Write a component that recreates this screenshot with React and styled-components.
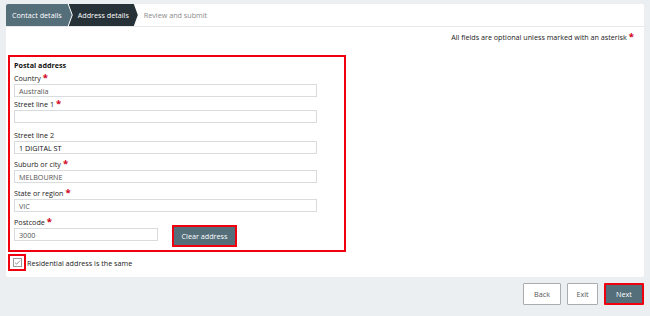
import React from "react";
import styled, { createGlobalStyle } from "styled-components";

const Global = createGlobalStyle`
  html, body { margin: 0; padding: 0; background: #eceff1; }
  body { font-family: "Open Sans", "Liberation Sans", sans-serif; font-size: 7.2px; color: #222; }
  * { box-sizing: border-box; }
`;

const Page = styled.div`
  width: 650px;
  height: 316px;
  padding: 4px 6px 0 6px;
  display: flex;
  flex-direction: column;
`;

const Card = styled.div`
  background: #fff;
  border-radius: 2px;
  height: 273px;
  display: flex;
  flex-direction: column;
`;

const TabBar = styled.div`
  height: 23px;
  display: flex;
  align-items: stretch;
  border-bottom: 1px solid #e6e8ea;
`;

const bgFor = (s) => (s === "done" ? "#546e7a" : s === "current" ? "#263238" : "transparent");

const Tab = styled.div`
  display: flex;
  align-items: center;
  height: 22px;
  padding: ${(p) => (p.$first ? "0 10px 0 6px" : p.$state === "todo" ? "0 0 0 6px" : "0 9px 0 9px")};
  margin-left: ${(p) => (p.$first || p.$state === "todo" ? "0" : "-3px")};
  background: ${(p) => bgFor(p.$state)};
  color: ${(p) => (p.$state === "todo" ? "#8a8a8a" : "#fff")};
  border-top-left-radius: ${(p) => (p.$first ? "2px" : "0")};
  white-space: nowrap;
  clip-path: ${(p) =>
    p.$state === "todo"
      ? "none"
      : p.$first
      ? "polygon(0 0, calc(100% - 4px) 0, 100% 50%, calc(100% - 4px) 100%, 0 100%)"
      : "polygon(0 0, calc(100% - 4px) 0, 100% 50%, calc(100% - 4px) 100%, 0 100%, 4px 50%)"};
`;

const Body = styled.div`
  padding: 0 0 0 2px;
  display: flex;
  flex-direction: column;
`;

const Note = styled.div`
  align-self: flex-end;
  padding: 5px 10px 0 0;
  height: 28px;
  line-height: 10px;
  color: #222;
`;

const Star = styled.span`
  color: #d0021b;
  font-size: 9.5px;
  font-weight: 700;
  margin-left: 2px;
  vertical-align: top;
  line-height: 9px;
`;

const Section = styled.div`
  width: 338px;
  border: 2px solid #f0000f;
  padding: 3px 4px 2px 4px;
  display: flex;
  flex-direction: column;
`;

const Heading = styled.div`
  font-weight: 700;
  line-height: 10px;
  height: 13px;
  color: #111;
`;

const Field = styled.div`
  display: flex;
  flex-direction: column;
  margin-bottom: ${(p) => (p.$gap != null ? p.$gap : 5)}px;
  padding-bottom: ${(p) => (p.$last ? "7px" : "0")};
`;

const Label = styled.div`
  line-height: 10px;
  height: 10px;
  margin-bottom: 1px;
  color: #222;
`;

const Input = styled.div`
  width: ${(p) => p.$w || 303}px;
  height: 13px;
  border: 1px solid #d9dcdf;
  background: #fff;
  padding: 0 4px;
  display: flex;
  align-items: center;
  color: ${(p) => (p.$dim ? "#555" : "#111")};
`;

const Row = styled.div`
  display: flex;
  align-items: flex-end;
  gap: 14px;
  margin-top: 1px;
`;

const ClearButton = styled.div`
  width: 65px;
  height: 22px;
  background: #546e7a;
  border: 2px solid #f0000f;
  color: #fff;
  display: flex;
  align-items: center;
  justify-content: center;
  margin-bottom: 1px;
`;

const CheckRow = styled.div`
  display: flex;
  align-items: center;
  margin-top: 2px;
  height: 17px;
`;

const CheckHighlight = styled.div`
  width: 18px;
  height: 17px;
  border: 2px solid #f0000f;
  display: flex;
  align-items: center;
  justify-content: center;
`;

const CheckLabel = styled.span`
  margin-left: 1px;
  color: #222;
`;

const Footer = styled.div`
  display: flex;
  justify-content: flex-end;
  gap: 6px;
  padding-top: 6px;
`;

const Button = styled.div`
  height: 22px;
  width: ${(p) => p.$w}px;
  display: flex;
  align-items: center;
  justify-content: center;
  background: ${(p) => (p.$primary ? "#546e7a" : "#fff")};
  color: ${(p) => (p.$primary ? "#fff" : "#555")};
  border: ${(p) => (p.$primary ? "2px solid #f0000f" : "1px solid #a9adb0")};
  border-radius: 1px;
`;

const CheckIcon = () => (
  <svg width="9" height="9" viewBox="0 0 9 9">
    <rect x="0.5" y="0.5" width="8" height="8" fill="#fff" stroke="#9a9a9a" strokeWidth="1" />
    <path d="M2 4.6 L3.7 6.2 L7 2.6" fill="none" stroke="#8a8a8a" strokeWidth="0.9" />
  </svg>
);

export default function App() {
  return (
    <>
      <Global />
      <Page>
        <Card>
          <TabBar>
            <Tab $first $state="done">Contact details</Tab>
            <Tab $state="current">Address details</Tab>
            <Tab $state="todo">Review and submit</Tab>
          </TabBar>
          <Body>
            <Note>
              All fields are optional unless marked with an asterisk<Star>*</Star>
            </Note>
            <Section>
              <Heading>Postal address</Heading>
              <Field $gap={2}>
                <Label>Country<Star>*</Star></Label>
                <Input $dim>Australia</Input>
              </Field>
              <Field $gap={7}>
                <Label>Street line 1<Star>*</Star></Label>
                <Input />
              </Field>
              <Field>
                <Label>Street line 2</Label>
                <Input>1 DIGITAL ST</Input>
              </Field>
              <Field>
                <Label>Suburb or city<Star>*</Star></Label>
                <Input $dim>MELBOURNE</Input>
              </Field>
              <Field $gap={4}>
                <Label>State or region<Star>*</Star></Label>
                <Input $dim>VIC</Input>
              </Field>
              <Row>
                <Field $last $gap={0}>
                  <Label>Postcode<Star>*</Star></Label>
                  <Input $w={144} $dim>3000</Input>
                </Field>
                <ClearButton>Clear address</ClearButton>
              </Row>
            </Section>
            <CheckRow>
              <CheckHighlight>
                <CheckIcon />
              </CheckHighlight>
              <CheckLabel>Residential address is the same</CheckLabel>
            </CheckRow>
          </Body>
        </Card>
        <Footer>
          <Button $w={38}>Back</Button>
          <Button $w={31}>Exit</Button>
          <Button $w={40} $primary>Next</Button>
        </Footer>
      </Page>
    </>
  );
}
